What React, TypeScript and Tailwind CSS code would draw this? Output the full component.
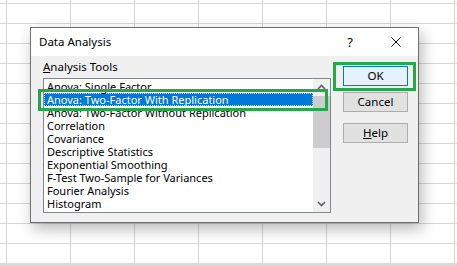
import React from 'react';

const TOOLS = [
  'Anova: Single Factor',
  'Anova: Two-Factor With Replication',
  'Anova: Two-Factor Without Replication',
  'Correlation',
  'Covariance',
  'Descriptive Statistics',
  'Exponential Smoothing',
  'F-Test Two-Sample for Variances',
  'Fourier Analysis',
  'Histogram',
];

const SELECTED = 1;

const Chevron = ({ up }: { up?: boolean }) => (
  <svg width="9" height="6" viewBox="0 0 9 6" className={up ? 'rotate-180' : ''}>
    <path d="M1 1 L4.5 4.5 L8 1" fill="none" stroke="#606060" strokeWidth="1.6" />
  </svg>
);

const App = () => {
  return (
    <div className="relative w-[457px] h-[266px] overflow-hidden bg-white font-['Noto_Sans',sans-serif] text-[11px] text-black">
      {/* sheet gridlines */}
      <div className="h-[263px] overflow-hidden">
        <div className="-ml-[57px] -mt-[16px] grid grid-cols-[repeat(9,64px)]">
          {Array.from({ length: 9 * 14 }).map((_, i) => (
            <div key={i} className="h-5 border-r border-b border-[#d6d6d6]" />
          ))}
        </div>
      </div>
      <div className="h-[3px] bg-[#d9d9d9]" />

      {/* dialog */}
      <div className="absolute left-[30px] top-[27px] w-[389px] h-[196px] border border-[#707070] bg-[#f0f0f0] shadow-[3px_6px_14px_rgba(0,0,0,0.28)] flex flex-col">
        <div className="h-[28px] bg-white flex items-center pl-[8px] pr-[17px]">
          <span className="text-[11.5px] leading-[14px]">Data Analysis</span>
          <span className="ml-auto text-[13px] leading-[14px]">?</span>
          <svg width="10" height="10" viewBox="0 0 10 10" className="ml-[38px]">
            <path d="M0.5 0.5 L9.5 9.5 M9.5 0.5 L0.5 9.5" stroke="#111" strokeWidth="1" />
          </svg>
        </div>

        <div className="flex flex-1">
          <div className="pl-[12px] pt-[4px]">
            <div className="text-[11.5px] leading-[14px]">
              <span className="underline">A</span>nalysis Tools
            </div>
            <div className="relative mt-[4px] w-[288px] h-[135px] border border-[#828790] bg-white flex">
              <div className="flex-1 pt-[1px]">
                {TOOLS.map((t, i) => (
                  <div
                    key={t}
                    className={`h-[13px] leading-[12px] whitespace-nowrap ${
                      i === SELECTED
                        ? 'bg-[#0078d7] text-white border border-dotted border-[#c9def5] pl-[2px]'
                        : 'pl-[3px] pt-[0.5px]'
                    }`}
                  >
                    {t}
                  </div>
                ))}
              </div>
              <div className="w-[17px] bg-[#f0f0f0] flex flex-col items-center">
                <div className="h-[16px] flex items-center justify-center">
                  <Chevron up />
                </div>
                <div className="mt-[1px] h-[52px] w-full bg-[#cdcdcd]" />
                <div className="flex-1" />
                <div className="h-[16px] flex items-center justify-center">
                  <Chevron />
                </div>
              </div>
              {/* highlight */}
              <div className="absolute -left-[6px] top-[10px] w-[290px] h-[22px] border-[3px] border-[#24a84a]" />
            </div>
          </div>

          <div className="ml-[12px] pt-[10px] flex flex-col">
            <button className="w-[65px] h-[20px] border border-[#0078d7] bg-[#e5f1fb] text-[11.5px] leading-[18px]">OK</button>
            <button className="mt-[6px] w-[65px] h-[20px] border border-[#adadad] bg-[#e1e1e1] text-[11.5px] leading-[18px]">Cancel</button>
            <button className="mt-[11px] w-[65px] h-[20px] border border-[#adadad] bg-[#e1e1e1] text-[11.5px] leading-[18px]">
              <span className="underline">H</span>elp
            </button>
          </div>
        </div>

        {/* OK highlight */}
        <div className="absolute left-[302px] top-[34px] w-[83px] h-[29px] border-[3px] border-[#24a84a]" />
      </div>
    </div>
  );
};

export default App;
